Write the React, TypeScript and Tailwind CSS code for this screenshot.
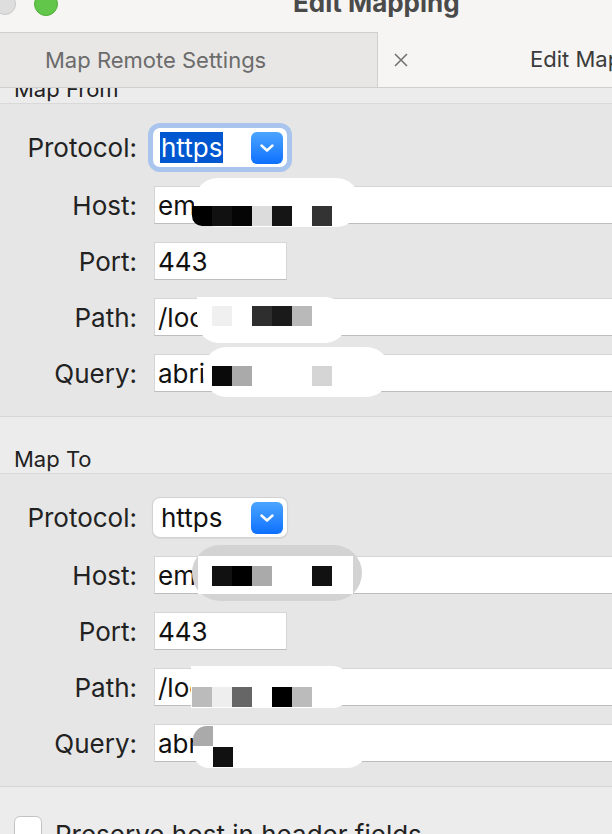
import type { ReactNode } from "react";

// redaction blocks, 20px squares laid out in a row
const Cells = ({ at, cells }: { at: string; cells: string[] }) => (
	<div className={`absolute flex ${at}`}>
		{cells.map((c, i) => (
			<span key={i} className={`block h-[20px] w-[20px] ${c}`} />
		))}
	</div>
);

const Field = ({
	label,
	value,
	short,
	children,
}: {
	label: string;
	value: string;
	short?: boolean;
	children?: ReactNode;
}) => (
	<div className="flex h-[38px] items-center">
		<span className="w-[137px] shrink-0 text-right text-[26px] text-[#222]">{label}</span>
		<div
			className={`relative ml-[17px] flex h-[38px] shrink-0 items-center border border-[#d6d6d6] border-b-[#bdbdbd] bg-white pl-[3px] text-[26px] text-[#111] ${
				short ? "w-[133px]" : "w-[480px]"
			}`}
		>
			<span className="whitespace-nowrap">{value}</span>
			{children}
		</div>
	</div>
);

const Select = ({ focused }: { focused?: boolean }) => (
	<div className="flex h-[39px] items-center">
		<span className="w-[137px] shrink-0 text-right text-[26px] text-[#222]">Protocol:</span>
		<div
			className={`ml-[16px] flex h-[39px] w-[134px] shrink-0 items-center justify-between rounded-[7px] bg-white pl-[7px] pr-[4px] shadow-[0_0_0_1px_#d2d2d2,0_1px_2px_rgba(0,0,0,0.18)] ${
				focused ? "ring-[5px] ring-[#a9c5ee]" : ""
			}`}
		>
			<span
				className={`h-[31px] px-[1px] text-[26px] leading-[31px] ${
					focused ? "bg-[#0058d0] text-white" : "text-[#111]"
				}`}
			>
				https
			</span>
			<div className="flex h-[32px] w-[32px] items-center justify-center rounded-[6px] bg-linear-to-b from-[#4aa4ff] to-[#0b6fff]">
				<svg width="14" height="8" viewBox="0 0 14 8">
					<path
						d="M1.5 1.5 L7 6.5 L12.5 1.5"
						stroke="white"
						strokeWidth="2.4"
						fill="none"
						strokeLinecap="round"
						strokeLinejoin="round"
					/>
				</svg>
			</div>
		</div>
	</div>
);

const Header = ({ title }: { title: string }) => (
	<div className="flex h-[57px] items-end border-b border-[#d9d9d9] bg-[#ececec] pb-[3px] pl-[14px]">
		<span className="text-[22px] leading-none text-[#222]">{title}</span>
	</div>
);

const Body = ({ children }: { children: ReactNode }) => (
	<div className="flex flex-col border-b border-[#d6d6d6] bg-[#e6e6e6] pb-[24px] pt-[24px]">
		{children}
	</div>
);

const App = () => {
	return (
		<div className="h-[834px] w-[612px] overflow-hidden bg-[#ececec] font-['Inter',sans-serif]">
			{/* title bar */}
			<div className="flex h-[32px] items-start overflow-hidden bg-[#f6f5f3]">
				<span className="-ml-[6px] -mt-[7px] block h-[22px] w-[22px] shrink-0 rounded-full border border-[#c9c9c9] bg-[#dedede]" />
				<span className="-mt-[8px] ml-[18px] block h-[24px] w-[24px] shrink-0 rounded-full border border-[#4fae3a] bg-[#62c64a]" />
				<span className="-mt-[10px] ml-[235px] whitespace-nowrap text-[26px] font-bold leading-none text-[#4a4a4a]">
					Edit Mapping
				</span>
			</div>

			{/* tabs */}
			<div className="flex h-[56px] border-b border-[#cfcfcf]">
				<div className="flex w-[378px] shrink-0 items-center border-r border-t border-[#cfcfcf] bg-[#e8e7e6] pl-[45px]">
					<span className="text-[22px] text-[#6b6b6b]">Map Remote Settings</span>
				</div>
				<div className="flex flex-1 items-center overflow-hidden whitespace-nowrap bg-[#f6f5f3] pl-[15px]">
					<svg width="16" height="16" viewBox="0 0 16 16" className="shrink-0">
						<path d="M2 2 L14 14 M14 2 L2 14" stroke="#737373" strokeWidth="1.6" />
					</svg>
					<span className="ml-[121px] text-[22px] text-[#3b3b3b]">Edit Mapping</span>
				</div>
			</div>

			{/* scrolled content */}
			<div className="h-[746px] overflow-hidden">
				<div className="-mt-[41px]">
					<Header title="Map From" />
					<Body>
						<Select focused />
						<div className="mt-[19px] flex flex-col gap-[18px]">
							<Field label="Host:" value="em">
								<div className="absolute left-[39px] top-[-9px] h-[49px] w-[166px] rounded-[24px] bg-white" />
								<Cells
									at="left-[37px] top-[19px]"
									cells={["bg-black rounded-bl-[10px]", "bg-[#111]", "bg-[#050505]", "bg-[#dcdcdc]", "bg-[#151515]", "bg-white", "bg-[#333]"]}
								/>
							</Field>
							<Field label="Port:" value="443" short />
							<Field label="Path:" value="/loc">
								<div className="absolute left-[42px] top-[-2px] h-[46px] w-[150px] rounded-[22px] rounded-tl-none bg-white" />
								<Cells
									at="left-[57px] top-[7px]"
									cells={["bg-[#f0f0f0]", "bg-white", "bg-[#2e2e2e]", "bg-[#1a1a1a]", "bg-[#b9b9b9]"]}
								/>
							</Field>
							<Field label="Query:" value="abri">
								<div className="absolute left-[48px] top-[-8px] h-[50px] w-[187px] rounded-[24px] bg-white" />
								<Cells
									at="left-[57px] top-[11px]"
									cells={["bg-[#0a0a0a]", "bg-[#aaa]", "bg-white", "bg-white", "bg-white", "bg-[#d5d5d5]"]}
								/>
							</Field>
						</div>
					</Body>

					<Header title="Map To" />
					<Body>
						<Select />
						<div className="mt-[19px] flex flex-col gap-[18px]">
							<Field label="Host:" value="emf">
								<div className="absolute left-[37px] top-[-12px] h-[56px] w-[170px] rounded-[28px] bg-[#d3d3d3]" />
								<div className="absolute left-[43px] top-[-1px] h-[38px] w-[155px] bg-white" />
								<Cells
									at="left-[57px] top-[9px]"
									cells={["bg-[#111]", "bg-black", "bg-[#aaa]", "bg-white", "bg-white", "bg-[#111]"]}
								/>
							</Field>
							<Field label="Port:" value="443" short />
							<Field label="Path:" value="/loc">
								<div className="absolute left-[36px] top-[-3px] h-[42px] w-[161px] rounded-r-[20px] bg-white" />
								<Cells
									at="left-[37px] top-[18px]"
									cells={["bg-[#bbb]", "bg-[#eee]", "bg-[#666]", "bg-white", "bg-black", "bg-[#bbb]"]}
								/>
							</Field>
							<Field label="Query:" value="abri">
								<div className="absolute left-[38px] top-[1px] h-[42px] w-[174px] rounded-r-[20px] rounded-bl-[16px] bg-white" />
								<Cells at="left-[38px] top-[1px]" cells={["bg-[#aaa] rounded-tl-[14px]"]} />
								<Cells at="left-[58px] top-[22px]" cells={["bg-[#111]"]} />
							</Field>
						</div>
					</Body>

					{/* options */}
					<div className="flex items-start gap-[13px] pl-[14px] pt-[29px]">
						<span className="block h-[28px] w-[28px] shrink-0 rounded-[6px] border border-[#c3c3c3] bg-white" />
						<span className="-mt-[1px] whitespace-nowrap text-[26px] text-[#222]">
							Preserve host in header fields
						</span>
					</div>
				</div>
			</div>
		</div>
	);
};

export default App;
